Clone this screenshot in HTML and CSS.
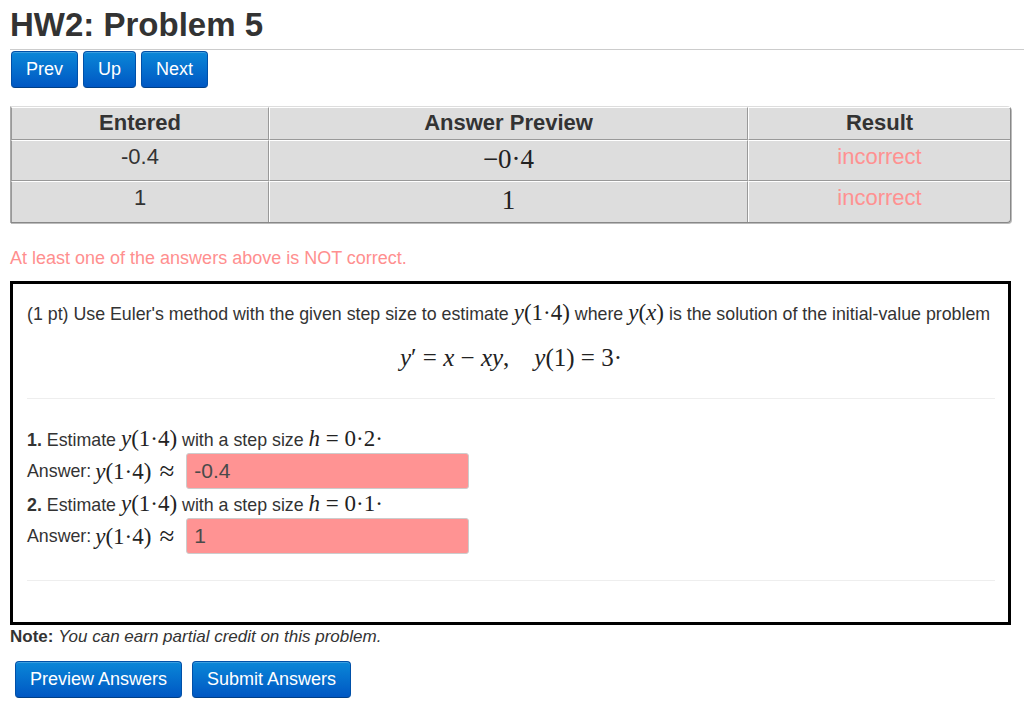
FILE: index.html
```html
<!DOCTYPE html>
<html>
<head>
<meta charset="utf-8">
<link rel="stylesheet" href="styles.css">
</head>
<body>
<div class="page">
  <h1 class="title">HW2: Problem 5</h1>
  <div class="nav">
    <a class="btn">Prev</a>
    <a class="btn">Up</a>
    <a class="btn">Next</a>
  </div>

  <table class="results">
    <tr>
      <th class="c1">Entered</th>
      <th class="c2">Answer Preview</th>
      <th class="c3">Result</th>
    </tr>
    <tr>
      <td>-0.4</td>
      <td class="preview">−0·4</td>
      <td class="bad">incorrect</td>
    </tr>
    <tr>
      <td>1</td>
      <td class="preview">1</td>
      <td class="bad">incorrect</td>
    </tr>
  </table>

  <p class="warn">At least one of the answers above is NOT correct.</p>

  <div class="problem">
    <p class="line first">(1 pt) Use Euler's method with the given step size to estimate <span class="m"><i>y</i>(1·4)</span> where <span class="m"><i>y</i>(<i>x</i>)</span> is the solution of the initial-value problem</p>
    <p class="line eq"><span class="m"><i>y</i>′ = <i>x</i> − <i>xy</i>,&nbsp;&nbsp;&nbsp;&nbsp;<i>y</i>(1) = 3·</span></p>
    <hr class="rule">
    <p class="line q"><b>1.</b> Estimate <span class="m"><i>y</i>(1·4)</span> with a step size <span class="m"><i>h</i> = 0·2·</span></p>
    <div class="ans">Answer: <span class="m"><i>y</i>(1·4)</span><span class="m approx">≈</span><span class="input">-0.4</span></div>
    <p class="line q2"><b>2.</b> Estimate <span class="m"><i>y</i>(1·4)</span> with a step size <span class="m"><i>h</i> = 0·1·</span></p>
    <div class="ans">Answer: <span class="m"><i>y</i>(1·4)</span><span class="m approx">≈</span><span class="input">1</span></div>
    <hr class="rule rule2">
  </div>

  <p class="note"><b>Note:</b> <i>You can earn partial credit on this problem.</i></p>

  <div class="actions">
    <a class="btn big">Preview Answers</a>
    <a class="btn big">Submit Answers</a>
  </div>
</div>
</body>
</html>
```

FILE: styles.css
```css
html, body {
  margin: 0;
  padding: 0;
  background: #fff;
}
body {
  font-family: "Liberation Sans", Arial, sans-serif;
  color: #333;
  overflow: hidden;
}
.page {
  padding: 0 0 0 10px;
}
.title {
  margin: 6px 0 0 0;
  font-size: 33px;
  line-height: 38px;
  font-weight: bold;
  color: #333;
  padding-bottom: 5px;
  border-bottom: 1px solid #ccc;
}
.nav {
  display: flex;
  gap: 5px;
  margin-top: 1px;
  padding-left: 1px;
}
.btn {
  display: inline-flex;
  align-items: center;
  justify-content: center;
  height: 37px;
  box-sizing: border-box;
  padding: 0 14px;
  font-size: 18px;
  color: #fff;
  background: linear-gradient(#0a87d8, #0057c3);
  border: 1px solid #0050a8;
  border-bottom-color: #003f86;
  border-radius: 4px;
  box-shadow: inset 0 1px 0 rgba(255,255,255,0.2);
}
.results {
  margin-top: 18px;
  width: 1001px;
  border-collapse: separate;
  border-spacing: 0;
  background: #ddd;
  border: 1px solid #aaa;
  border-top-color: #ddd;
  border-right-color: #888;
  border-bottom-color: #888;
  border-radius: 0 4px 4px 0;
  box-shadow: 1px 1px 0 #bbb;
  font-size: 22px;
}
.results th, .results td {
  text-align: center;
  vertical-align: top;
  border-left: 1px solid #fff;
  border-right: 1px solid #999;
  border-top: 1px solid #fff;
  border-bottom: 1px solid #999;
  padding: 0;
}
.results th {
  height: 31px;
  line-height: 30px;
  font-weight: bold;
  color: #333;
}
.results td {
  height: 41px;
  line-height: 28px;
  padding-top: 2px;
  box-sizing: border-box;
}
.results tr:last-child td { border-bottom: none; }
.results th:first-child, .results td:first-child { border-left-color: #999; }
.results th:last-child, .results td:last-child { border-right: none; }
.c1 { width: 256px; }
.c2 { width: 477px; }
.results td.preview {
  font-family: "Liberation Serif", "Times New Roman", serif;
  font-size: 27px;
  line-height: 32px;
  padding-top: 2px;
  color: #222;
}
.results td.bad { color: #ff9191; }
.warn {
  margin: 24px 0 0 0;
  font-size: 18px;
  line-height: 22px;
  color: #ff8f8f;
}
.problem {
  margin-top: 12px;
  width: 1001px;
  box-sizing: border-box;
  border: 3px solid #000;
  padding: 16px 13px 41px 14px;
  font-size: 17.8px;
}
.problem p { margin: 0; }
.line {
  line-height: 28px;
}
.first {
  white-space: nowrap;
}
.m {
  font-family: "Liberation Serif", "Times New Roman", serif;
  font-size: 23px;
  line-height: 1;
  color: #222;
}
.eq {
  text-align: center;
  margin-top: 17px !important;
}
.eq .m { font-size: 25px; }
.rule {
  border: 0;
  border-top: 1px solid #eee;
  margin: 24px 0 0 0;
  height: 0;
}
.q { margin-top: 27px !important; }
.q2 { margin-top: 2px !important; }
.rule2 { margin-top: 26px; }
.ans {
  display: flex;
  align-items: center;
  height: 36px;
  margin-top: -1px;
}
.ans .m { margin-left: 4px; }
.ans .approx {
  font-size: 27px;
  margin-left: 8px;
}
.input {
  display: inline-block;
  box-sizing: border-box;
  width: 283px;
  height: 36px;
  line-height: 34px;
  margin-left: 12px;
  padding-left: 7px;
  background: #ff9393;
  border: 1px solid #ccc;
  border-radius: 3px;
  font-family: "Liberation Sans", Arial, sans-serif;
  font-size: 21px;
  color: #4a4a4a;
}
.note {
  margin: 2px 0 0 0;
  font-size: 17px;
  line-height: 20px;
}
.actions {
  display: flex;
  gap: 10px;
  margin-top: 14px;
  padding-left: 5px;
}
.btn.big {
  height: 37px;
  padding: 0 14px;
  font-size: 18px;
}
```
